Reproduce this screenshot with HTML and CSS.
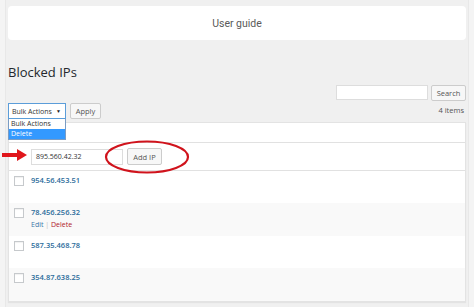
FILE: index.html
```html
<!DOCTYPE html>
<html>
<head>
<meta charset="utf-8">
<link rel="stylesheet" href="styles.css">
</head>
<body>
<div class="page">
  <div class="guide">User guide</div>
  <h1 class="title">Blocked IPs</h1>
  <div class="search-row">
    <div class="search-input"></div>
    <div class="btn search-btn">Search</div>
  </div>
  <div class="tablenav">
    <div class="bulk">
      <div class="select">Bulk Actions <span class="caret">&#9660;</span></div>
      <div class="btn apply">Apply</div>
      <div class="dropdown">
        <div class="opt">Bulk Actions</div>
        <div class="opt sel">Delete</div>
      </div>
    </div>
    <div class="count">4 items</div>
  </div>
  <div class="table">
    <div class="head"></div>
    <div class="addrow">
      <div class="ip-input">895.560.42.32</div>
      <div class="btn addip">Add IP</div>
      <svg class="arrow" width="26" height="14" viewBox="0 0 26 14"><path d="M0 5 H15 V1 L25 7 L15 13 V9 H0 Z" fill="#e0161b"/></svg>
      <svg class="ellipse" width="86" height="36" viewBox="0 0 86 36"><ellipse cx="43" cy="18" rx="41" ry="15.5" fill="none" stroke="#d0131c" stroke-width="2.2"/></svg>
    </div>
    <div class="row">
      <div class="cb"></div>
      <div class="cell"><a class="ip">954.56.453.51</a></div>
    </div>
    <div class="row alt">
      <div class="cb"></div>
      <div class="cell"><a class="ip">78.456.256.32</a>
        <div class="actions"><span class="edit">Edit</span> <span class="sep">|</span> <span class="del">Delete</span></div>
      </div>
    </div>
    <div class="row">
      <div class="cb"></div>
      <div class="cell"><a class="ip">587.35.468.78</a></div>
    </div>
    <div class="row alt">
      <div class="cb"></div>
      <div class="cell"><a class="ip">354.87.638.25</a></div>
    </div>
  </div>
</div>
</body>
</html>
```
FILE: styles.css
```css
html, body {
  margin: 0;
  padding: 0;
}
body {
  background: #f4f4f4;
  font-family: "Open Sans", "Noto Sans", sans-serif;
  color: #444;
  width: 474px;
  height: 307px;
  overflow: hidden;
}
.page {
  margin: 0 5px;
  padding: 6px 2px 0 2px;
  background: #f0f0f0;
  border-left: 1px solid #e8e8e8;
  border-right: 1px solid #e8e8e8;
  height: 301px;
}
.guide {
  height: 34px;
  background: #fff;
  border-radius: 4px;
  display: flex;
  align-items: center;
  justify-content: center;
  font-family: Roboto, sans-serif;
  font-size: 10.5px;
  color: #5a5a5a;
}
.title {
  margin: 22px 0 0 0;
  font-size: 13px;
  font-weight: 400;
  color: #23282d;
  line-height: 20px;
  height: 23px;
}
.search-row {
  display: flex;
  justify-content: flex-end;
  gap: 3px;
  height: 16px;
}
.search-input {
  width: 92px;
  height: 15px;
  background: #fff;
  border: 1px solid #ddd;
  box-sizing: border-box;
}
.btn {
  background: #f7f7f7;
  border: 1px solid #ccc;
  border-radius: 2px;
  box-sizing: border-box;
  font-size: 7px;
  color: #555;
  display: flex;
  align-items: center;
  justify-content: center;
}
.search-btn {
  width: 35px;
  height: 16px;
  font-size: 7.5px;
}
.tablenav {
  display: flex;
  justify-content: space-between;
  align-items: flex-start;
  margin-top: 2px;
  height: 19px;
}
.bulk {
  display: flex;
  gap: 4px;
  position: relative;
}
.select {
  width: 58px;
  height: 16px;
  box-sizing: border-box;
  border: 1px solid #5b9dd9;
  background: #fff;
  font-size: 7px;
  color: #333;
  padding-left: 3px;
  display: flex;
  align-items: center;
  gap: 4px;
}
.caret {
  font-size: 5px;
  color: #222;
}
.apply {
  width: 31px;
  height: 16px;
  font-size: 7.5px;
}
.dropdown {
  position: absolute;
  left: 0;
  top: 16px;
  width: 58px;
  background: #fff;
  border: 1px solid #7a9cc4;
  border-top: none;
  box-sizing: border-box;
  z-index: 2;
}
.opt {
  height: 10px;
  font-size: 7px;
  line-height: 10px;
  padding-left: 2px;
  color: #333;
}
.opt.sel {
  background: #3399ff;
  color: #fff;
}
.count {
  font-size: 7.5px;
  color: #555;
  margin-top: 2px;
  margin-right: 2px;
}
.table {
  background: #fff;
  border: 1px solid #e3e3e3;
  box-shadow: 0 1px 1px rgba(0,0,0,0.05);
}
.head {
  height: 19px;
  border-bottom: 1px solid #e1e1e1;
}
.addrow {
  position: relative;
  height: 27px;
  border-bottom: 1px solid #e1e1e1;
  display: flex;
  align-items: center;
  gap: 4px;
  padding-left: 22px;
}
.ip-input {
  width: 92px;
  height: 16px;
  box-sizing: border-box;
  border: 1px solid #ddd;
  font-size: 7px;
  color: #333;
  display: flex;
  align-items: center;
  padding-left: 4px;
}
.addip {
  width: 35px;
  height: 17px;
  font-size: 7.5px;
}
.arrow {
  position: absolute;
  left: -7px;
  top: 5px;
}
.ellipse {
  position: absolute;
  left: 95px;
  top: -4px;
}
.row {
  height: 32px;
  display: flex;
  align-items: flex-start;
  padding-left: 5px;
  gap: 7px;
}
.row.alt {
  background: #f9f9f9;
  height: 33px;
}
.cb {
  width: 10px;
  height: 10px;
  box-sizing: border-box;
  border: 1px solid #c6c9cc;
  background: #fff;
  margin-top: 5px;
  box-shadow: inset 0 1px 1px rgba(0,0,0,0.06);
}
.cell {
  padding-top: 4px;
}
.ip {
  font-size: 7.5px;
  font-weight: 600;
  color: #2b6c9b;
  line-height: 11px;
  display: block;
}
.actions {
  font-size: 7px;
  line-height: 11px;
  margin-top: 1px;
}
.edit { color: #3a78a8; }
.sep { color: #bbb; }
.del { color: #b0202a; }
```
